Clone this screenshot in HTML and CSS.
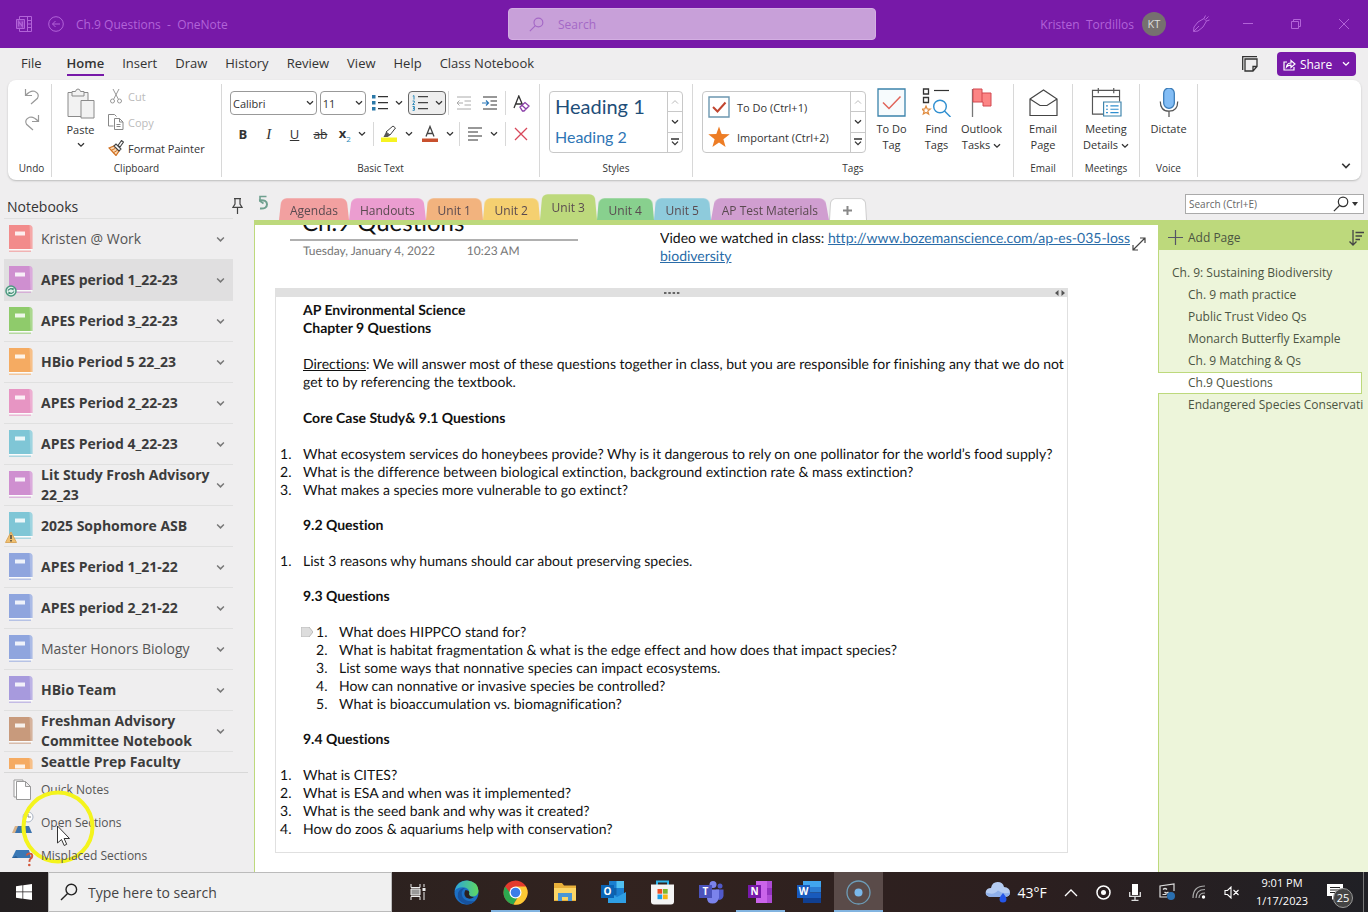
FILE: index.html
```
<!DOCTYPE html>
<html lang="en">
<head>
    <meta charset="UTF-8">
    <meta name="viewport" content="width=device-width, initial-scale=1.0">
    <title>Ch.9 Questions - OneNote</title>
    <link rel="stylesheet" href="styles.css">
</head>
<body>

    <!-- shared icons -->
    <svg class="defs" width="0" height="0">
        <symbol id="chev" viewBox="0 0 8 6"><path d="M1 1.2l3 3 3-3" fill="none" stroke="currentColor" stroke-width="1.3"/></symbol>
        <symbol id="chev-up" viewBox="0 0 8 6"><path d="M1 4.6l3-3 3 3" fill="none" stroke="currentColor" stroke-width="1"/></symbol>
        <symbol id="chev-more" viewBox="0 0 8 8"><path d="M0 1h8M1 3.6l3 3 3-3" fill="none" stroke="currentColor" stroke-width="1.3"/></symbol>
        <symbol id="lens" viewBox="0 0 18 18"><path d="M7.6 10.4L1 17" fill="none" stroke="currentColor" stroke-width="1.4"/><circle cx="11.3" cy="6.6" r="5.3" fill="none" stroke="currentColor" stroke-width="1.4"/></symbol>
        <symbol id="book" viewBox="0 0 24 28">
            <path d="M0 0h20q3.500 0 3.500 3.500v20.500h-23.500z" fill="currentColor"/>
            <path d="M20.500 0q3 .5 3 3.500v20.500h-2z" fill="#fff" opacity=".25"/>
            <path d="M0 24h23.500v1.500h-23.500z" fill="#fff" opacity=".8"/>
            <path d="M0 25.500h22v1.500h-22z" fill="currentColor" opacity=".6"/>
            <path d="M6 6.500h10v4h-10z" fill="#fff" opacity=".85"/>
        </symbol>
    </svg>

    <header class="titlebar">
        <div class="title-left">
            <svg width="16" height="16" viewBox="0 0 16 16" fill="none" stroke="currentColor"><path d="M3.500 3.500v-3h12v15h-12v-3M11.500.5v15M11.500 4.500h4M11.500 8h4M11.500 11.500h4"/><path d="M.5 3.500h8v9h-8z" fill="currentColor" fill-opacity=".35"/><path d="M2.700 10.500v-5l3.600 5v-5" stroke-width="1.200"/></svg>
            <button class="back" aria-label="Back"><svg width="16" height="16" viewBox="0 0 16 16" fill="none" stroke="currentColor"><circle cx="8" cy="8" r="7.300"/><path d="M12 8H4.500M7.500 5l-3 3 3 3"/></svg></button>
            <span>Ch.9 Questions&nbsp; -&nbsp; OneNote</span>
        </div>
        <label class="title-search">
            <svg width="15" height="15"><use href="#lens"/></svg>
            <input type="text" placeholder="Search" aria-label="Search">
        </label>
        <div class="title-right">
            <span>Kristen&nbsp; Tordillos</span>
            <span class="avatar">KT</span>
            <div class="window-buttons">
                <button aria-label="Draw"><svg width="18" height="18" viewBox="0 0 18 18" fill="none" stroke="currentColor"><path d="M6 7l6-3.500 2.500 2.500L11 12l-5 4-4.500.5L2 12zM2 16l5-5M12 3.500l1.500-3M14 4l2.500-2.500M14.500 6l3-1"/></svg></button>
                <button aria-label="Minimize"><svg width="12" height="12" viewBox="0 0 12 12" fill="none" stroke="currentColor"><path d="M1 5.500h10"/></svg></button>
                <button aria-label="Restore"><svg width="12" height="12" viewBox="0 0 12 12" fill="none" stroke="currentColor"><path d="M1.500 3.500h7v7h-7zM3.500 3.500v-2h7v7h-2"/></svg></button>
                <button aria-label="Close"><svg width="12" height="12" viewBox="0 0 12 12" fill="none" stroke="currentColor"><path d="M1 1l10 10M11 1L1 11"/></svg></button>
            </div>
        </div>
    </header>

    <nav class="menu">
        <button>File</button>
        <button class="active">Home</button>
        <button>Insert</button>
        <button>Draw</button>
        <button>History</button>
        <button>Review</button>
        <button>View</button>
        <button>Help</button>
        <button>Class Notebook</button>
        <div class="menu-right">
            <button aria-label="Sticky notes"><svg width="16" height="16" viewBox="0 0 16 16" fill="none" stroke="#333" stroke-width="1.300"><path d="M.7 14V.7H15M3 3h12v7.500L11 15H3zM15 10.500h-4V15"/></svg></button>
            <button class="share">
                <svg width="13" height="13" viewBox="0 0 13 13" fill="none" stroke="currentColor" stroke-width="1.200"><path d="M4 4H1v8h10V9"/><path d="M3.500 9q.5-4 4.500-4V2.500L12 6 8 9.500V7.200Q5 7 3.500 9z"/></svg>
                Share
                <svg class="chev" width="8" height="6"><use href="#chev"/></svg>
            </button>
        </div>
    </nav>

    <section class="ribbon">
        <div class="group undo">
            <div class="tools">
                <button aria-label="Undo"><svg width="16" height="18" viewBox="0 0 16 18" fill="none" stroke="#999" stroke-width="1.200"><path d="M1.500 1v6.500H8M1.500 7.500q5-5.500 9-4.200 5.500 2.200 3 7L7 16"/></svg></button>
                <button aria-label="Redo"><svg width="16" height="18" viewBox="0 0 16 18" fill="none" stroke="#999" stroke-width="1.200"><path d="M14.500 1v6.500H8M14.500 7.500q-5-5.500-9-4.200-5.500 2.200-3 7L9 16"/></svg></button>
            </div>
            <div class="group-label">Undo</div>
        </div>

        <div class="group clipboard">
            <div class="tools">
                <button class="big">
                    <svg width="28" height="31" viewBox="0 0 28 31" stroke="#8a8a8a" fill="#f2f2f2"><path d="M1 4.500h20v24H1z"/><path d="M5 8V3.500h3.500Q9 1 11 1t2.500 2.500H17V8z"/><path d="M14 12.500h13V30H14z"/></svg>
                    <span>Paste</span>
                    <svg class="chev" width="8" height="6"><use href="#chev"/></svg>
                </button>
                <div class="stack">
                    <button class="off"><svg width="16" height="16" viewBox="0 0 16 16" fill="none" stroke="#999"><path d="M5 1l5.500 10.500M11 1L5.500 11.500"/><circle cx="4.500" cy="13" r="2"/><circle cx="11.500" cy="13" r="2"/></svg>Cut</button>
                    <button class="off"><svg width="16" height="16" viewBox="0 0 16 16" fill="#fff" stroke="#888"><path d="M5.500 12H.5V.5h6l2 2"/><path d="M6.500 4.500h5l3.500 3.500v7.500H6.500zM11.500 4.500V8H15M8.500 10.500h4M8.500 12.500h4"/></svg>Copy</button>
                    <button><svg width="16" height="16" viewBox="0 0 16 16" fill="none"><path d="M1 8l5-2 5 5-3 4.500z" fill="#fbd9b5" stroke="#d07020" stroke-width="1.200"/><path d="M3 10.500l4-2M5 13l4-2.500" stroke="#d07020"/><path d="M6 6l2-2 5 5-2 2zM10 5.500l3.500-5L15.500 2 12 7z" fill="#fff" stroke="#444" stroke-width="1.100"/></svg>Format Painter</button>
                </div>
            </div>
            <div class="group-label">Clipboard</div>
        </div>

        <div class="group basic">
            <div class="tools">
                <div class="row">
                    <label class="combo font"><select aria-label="Font"><option>Calibri</option></select><svg width="8" height="6"><use href="#chev"/></svg></label>
                    <label class="combo size"><select aria-label="Font size"><option>11</option></select><svg width="8" height="6"><use href="#chev"/></svg></label>
                    <button class="tool split" aria-label="Bullets"><svg width="16" height="16" viewBox="0 0 16 16"><path d="M0 0h3.500v3.500H0zM0 6h3.500v3.500H0zM0 12h3.500v3.500H0z" fill="#2b78a8"/><path d="M6 1.700h10M6 7.700h10M6 13.700h10" stroke="#333" stroke-width="1.200"/></svg><svg class="chev" width="8" height="6"><use href="#chev"/></svg></button>
                    <button class="tool split pressed" aria-label="Numbering"><svg width="16" height="16" viewBox="0 0 16 16" fill="none"><path d="M.8 1.200L2 .6v4M.6 6h1.700v1.500L.7 9.500h2M.6 11.500h1.800v1.800H1h1.400v2H.6" stroke="#2b88b8"/><path d="M6 1.700h10M6 7.700h10M6 13.700h10" stroke="#444" stroke-width="1.200"/></svg><svg class="chev" width="8" height="6"><use href="#chev"/></svg></button>
                    <span class="sep"></span>
                    <button class="tool" aria-label="Decrease indent"><svg width="16" height="14" viewBox="0 0 16 14" fill="none" stroke="#aaa"><path d="M1 1h14M8.500 5H15M8.500 9H15M1 13h14M7 7H1M3.500 4.500L1 7l2.500 2.500"/></svg></button>
                    <button class="tool" aria-label="Increase indent"><svg width="16" height="14" viewBox="0 0 16 14" fill="none" stroke="#333" stroke-width="1.200"><path d="M1 1h14M8.500 5H15M8.500 9H15M1 13h14"/><path d="M0 7h6.500M4 4.500L6.500 7 4 9.500" stroke="#2b78b8"/></svg></button>
                    <span class="sep"></span>
                    <button class="tool" aria-label="Clear formatting"><svg width="17" height="17" viewBox="0 0 17 17" fill="none"><path d="M1 13L5.800 1 10 11M2.500 9h6" stroke="#333" stroke-width="1.300"/><path d="M7 12l5-4.500 4 3.500-5 5H9.500zM9 10.300l4 3.700" fill="#fff" stroke="#8a3fa8" stroke-width="1.300"/></svg></button>
                </div>
                <div class="row">
                    <button class="tool"><b>B</b></button>
                    <button class="tool italic"><i>I</i></button>
                    <button class="tool"><u>U</u></button>
                    <button class="tool"><s>ab</s></button>
                    <button class="tool split sub"><span><b>x</b><sub>2</sub></span><svg class="chev" width="8" height="6"><use href="#chev"/></svg></button>
                    <span class="sep"></span>
                    <button class="tool split wide" aria-label="Highlight"><svg width="18" height="18" viewBox="0 0 18 18"><path d="M1 12.500h16V17H1z" fill="#f6f321"/><path d="M6 7l7-6 2.500 2L10 10z" fill="#fff" stroke="#444"/><path d="M6 7l4 3.500-2.500 1.500H3.500z" fill="#555"/></svg><svg class="chev" width="8" height="6"><use href="#chev"/></svg></button>
                    <button class="tool split wide" aria-label="Font color"><svg width="18" height="18" viewBox="0 0 18 18"><path d="M1 13.500h16V17H1z" fill="#c8502e"/><path d="M5 11.500L9 1.500l4 10M6.300 8.500h5.400" fill="none" stroke="#444" stroke-width="1.300"/></svg><svg class="chev" width="8" height="6"><use href="#chev"/></svg></button>
                    <span class="sep"></span>
                    <button class="tool split wide" aria-label="Align"><svg width="16" height="14" viewBox="0 0 16 14" stroke="#333" stroke-width="1.200"><path d="M1 1h14M1 5h10M1 9h14M1 13h10"/></svg><svg class="chev" width="8" height="6"><use href="#chev"/></svg></button>
                    <span class="sep"></span>
                    <button class="tool" aria-label="Delete"><svg width="14" height="14" viewBox="0 0 14 14" stroke="#d8475a" stroke-width="1.300"><path d="M1 1l12 12M13 1L1 13"/></svg></button>
                </div>
            </div>
            <div class="group-label">Basic Text</div>
        </div>

        <div class="group styles">
            <div class="tools">
                <div class="gallery">
                    <div class="gallery-items">
                        <button class="h1-style">Heading 1</button>
                        <button class="h2-style">Heading 2</button>
                    </div>
                    <div class="gallery-scroll">
                        <button class="off" aria-label="Up"><svg width="8" height="6"><use href="#chev-up"/></svg></button>
                        <button aria-label="Down"><svg width="8" height="6"><use href="#chev"/></svg></button>
                        <button aria-label="More"><svg width="8" height="8"><use href="#chev-more"/></svg></button>
                    </div>
                </div>
            </div>
            <div class="group-label">Styles</div>
        </div>

        <div class="group tags">
            <div class="tools">
                <div class="gallery">
                    <div class="gallery-items">
                        <button><svg width="22" height="22" viewBox="0 0 22 22" fill="#fff"><path d="M1 1h20v20H1z" stroke="#6c97b0" stroke-width="1.400"/><path d="M5 11l4.500 4.500 8-9" fill="none" stroke="#c0452f" stroke-width="2"/></svg>To Do (Ctrl+1)</button>
                        <button><svg width="22" height="22" viewBox="0 0 22 22"><path d="M11 .5l2.700 7.500 8 .2-6.300 5 2.200 7.800L11 16.500 4.400 21l2.200-7.800-6.300-5 8-.2z" fill="#ed7d25"/></svg>Important (Ctrl+2)</button>
                    </div>
                    <div class="gallery-scroll">
                        <button class="off" aria-label="Up"><svg width="8" height="6"><use href="#chev-up"/></svg></button>
                        <button aria-label="Down"><svg width="8" height="6"><use href="#chev"/></svg></button>
                        <button aria-label="More"><svg width="8" height="8"><use href="#chev-more"/></svg></button>
                    </div>
                </div>
                <button class="big">
                    <svg width="29" height="29" viewBox="0 0 29 29" fill="none"><path d="M1 1h27v27H1z" fill="#f7fbfd" stroke="#3b83ab" stroke-width="1.300"/><path d="M6 14.500l6 6L23.500 8.500" stroke="#e0645a" stroke-width="1.500"/></svg>
                    <span>To Do<br>Tag</span>
                </button>
                <button class="big">
                    <svg width="29" height="29" viewBox="0 0 29 29" fill="none"><path d="M1.500 1h5v5h-5zM1.500 9.500h5v5h-5z" stroke="#333" stroke-width="1.300"/><path d="M12 2.500h15" stroke="#333" stroke-width="1.200"/><circle cx="18" cy="18.500" r="6.300" stroke="#2f8fd0" stroke-width="1.400"/><path d="M22.500 23l6 6" stroke="#2f8fd0" stroke-width="1.400"/><path d="M4 18l1.200 3 3 .1-2.400 2 .9 3L4 24.500 1.300 26l.9-3-2.400-1.900 3-.1z" stroke="#e08a3c" stroke-width="1.200"/></svg>
                    <span>Find<br>Tags</span>
                </button>
                <button class="big">
                    <svg width="22" height="29" viewBox="0 0 22 29"><path d="M1.500 29V1" stroke="#777" stroke-width="1.300"/><path d="M2 1h9v4h9v13h-8v-4H2z" fill="#fc8585" stroke="#d34850"/><path d="M11 5v9" stroke="#d34850"/></svg>
                    <span>Outlook<br>Tasks <svg class="chev" width="8" height="6"><use href="#chev"/></svg></span>
                </button>
            </div>
            <div class="group-label">Tags</div>
        </div>

        <div class="group email">
            <div class="tools">
                <button class="big">
                    <svg width="29" height="29" viewBox="0 0 29 29" fill="none" stroke="#444" stroke-width="1.200"><path d="M1 11L14.500 2 28 11v16.500H1zM1 11l10 6.500h7L28 11"/></svg>
                    <span>Email<br>Page</span>
                </button>
            </div>
            <div class="group-label">Email</div>
        </div>

        <div class="group meetings">
            <div class="tools">
                <button class="big">
                    <svg width="31" height="29" viewBox="0 0 31 30" fill="none" stroke="#555" stroke-width="1.200"><path d="M12 27H1V2.500h28V14M1 9h28M7 0v5.500M23 0v5.500"/><path d="M12.500 14.500h18V29h-18z" fill="#fff" stroke="#3b83ab"/><path d="M15 18.500h2M15 22h2M15 25.500h2M19.500 18.500H28M19.500 22H28M19.500 25.500H28" stroke="#2f8fd0"/></svg>
                    <span>Meeting<br>Details <svg class="chev" width="8" height="6"><use href="#chev"/></svg></span>
                </button>
            </div>
            <div class="group-label">Meetings</div>
        </div>

        <div class="group voice">
            <div class="tools">
                <button class="big">
                    <svg width="20" height="29" viewBox="0 0 20 30" fill="none" stroke="#555" stroke-width="1.300"><path d="M4.500 5.500a5.500 5.500 0 0 1 11 0v10a5.500 5.500 0 0 1-11 0z" fill="#83bdf5" stroke="#3b7cb8"/><path d="M1 14q0 10 9 10t9-10M10 24v6"/></svg>
                    <span>Dictate</span>
                </button>
            </div>
            <div class="group-label">Voice</div>
        </div>

        <button class="collapse" aria-label="Collapse ribbon"><svg width="10" height="8"><use href="#chev"/></svg></button>
    </section>

    <main class="workspace">
        <aside class="sidebar">
            <div class="sidebar-head">
                <h2>Notebooks</h2>
                <button aria-label="Pin"><svg width="11" height="16" viewBox="0 0 11 16" fill="none" stroke="#444" stroke-width="1.200"><path d="M2 .7h7M3 1v5L1 9.300h9L8 6V1M5.500 9.500V16"/></svg></button>
            </div>
            <ul class="notebooks">
                <li><svg class="book red"><use href="#book"/></svg><span>Kristen @ Work</span><svg class="chev"><use href="#chev"/></svg></li>
                <li class="selected unread"><svg class="book violet"><use href="#book"/></svg><span>APES period 1_22-23</span><svg class="chev"><use href="#chev"/></svg>
                    <svg class="status" width="12" height="12" viewBox="0 0 12 12"><circle cx="6" cy="6" r="5" fill="#dff0ea" stroke="#4c9a80" stroke-width="1.500"/><path d="M3 5.500q2-3 5-1V3M9 6.500q-2 3-5 1V9" fill="none" stroke="#3c8a70" stroke-width="1.200"/></svg></li>
                <li class="unread"><svg class="book green"><use href="#book"/></svg><span>APES Period 3_22-23</span><svg class="chev"><use href="#chev"/></svg></li>
                <li class="unread"><svg class="book orange"><use href="#book"/></svg><span>HBio Period 5 22_23</span><svg class="chev"><use href="#chev"/></svg></li>
                <li class="unread"><svg class="book pink"><use href="#book"/></svg><span>APES Period 2_22-23</span><svg class="chev"><use href="#chev"/></svg></li>
                <li class="unread"><svg class="book teal"><use href="#book"/></svg><span>APES Period 4_22-23</span><svg class="chev"><use href="#chev"/></svg></li>
                <li class="unread"><svg class="book violet"><use href="#book"/></svg><span>Lit Study Frosh Advisory 22_23</span><svg class="chev"><use href="#chev"/></svg></li>
                <li class="unread"><svg class="book teal"><use href="#book"/></svg><span>2025 Sophomore ASB</span><svg class="chev"><use href="#chev"/></svg>
                    <svg class="status" width="12" height="12" viewBox="0 0 12 12"><path d="M6 1l5.500 10.500H.5z" fill="#f0c070" stroke="#d9a860"/><path d="M6 4v4M6 9v1.500" stroke="#333" stroke-width="1.300"/></svg></li>
                <li class="unread"><svg class="book blue"><use href="#book"/></svg><span>APES Period 1_21-22</span><svg class="chev"><use href="#chev"/></svg></li>
                <li class="unread"><svg class="book blue"><use href="#book"/></svg><span>APES period 2_21-22</span><svg class="chev"><use href="#chev"/></svg></li>
                <li><svg class="book blue"><use href="#book"/></svg><span>Master Honors Biology</span><svg class="chev"><use href="#chev"/></svg></li>
                <li class="unread"><svg class="book purple"><use href="#book"/></svg><span>HBio Team</span><svg class="chev"><use href="#chev"/></svg></li>
                <li class="unread"><svg class="book brown"><use href="#book"/></svg><span>Freshman Advisory Committee Notebook</span><svg class="chev"><use href="#chev"/></svg></li>
                <li class="unread cut"><svg class="book orange"><use href="#book"/></svg><span>Seattle Prep Faculty</span></li>
            </ul>
            <ul class="quick">
                <li><svg width="20" height="22" viewBox="0 0 20 22" fill="#fff" stroke="#999"><path d="M1 1h9v17H1z"/><path d="M3.500 2.500h9l5 5v13h-14zM12.500 2.500v5h5"/></svg><a href="#">Quick Notes</a></li>
                <li><svg width="22" height="24" viewBox="0 0 22 24"><path d="M3 15h7l-2 7H0z" fill="#d9b287"/><path d="M6 15h11l3 7H3z" fill="#3a72ad"/><path d="M10 15h3l-2 7H8z" fill="#4f9a80"/><circle cx="16" cy="6" r="5" fill="#fff" stroke="#aab4c4"/><path d="M16 3v3h3" fill="none" stroke="#888"/></svg><a href="#">Open Sections</a>
                    <svg class="pointer" width="74" height="74" viewBox="0 0 74 74"><circle cx="37" cy="37" r="34.500" fill="none" stroke="#f4f41c" stroke-width="4"/><path d="M36.500 36v17l4-3.500 2.700 6 2.500-1.200-2.600-5.800h5.400z" fill="#fff" stroke="#333"/></svg></li>
                <li><svg width="22" height="22" viewBox="0 0 22 22"><path d="M4 5h13l2 8H0z" fill="#3a78b5"/><path d="M0 13h6l-2-2" fill="#2a5d94"/><path d="M14.500 10.500q1-2.500 3.500-2 3 .5 2 3.500-.5 1-1.500 1.800-1.200 1-1 3" fill="none" stroke="#d2583c" stroke-width="2"/><circle cx="17.300" cy="20" r="1.300" fill="#d2583c"/></svg><a href="#">Misplaced Sections</a></li>
            </ul>
        </aside>

        <div class="notebook">
            <div class="sections">
                <button class="up" aria-label="Navigate up"><svg width="12" height="16" viewBox="0 0 12 16" fill="none" stroke="#6fa08f" stroke-width="2"><path d="M2 5.500q8-1 8 3.800T3 13.500"/><path d="M9.500 1.500H3v4.500l3.500 2.500" stroke-width="1.600"/></svg></button>
                <button class="tab c-red">Agendas</button>
                <button class="tab c-pink">Handouts</button>
                <button class="tab c-orange">Unit 1</button>
                <button class="tab c-yellow">Unit 2</button>
                <button class="tab c-lime current">Unit 3</button>
                <button class="tab c-green">Unit 4</button>
                <button class="tab c-blue">Unit 5</button>
                <button class="tab c-purple">AP Test Materials</button>
                <button class="tab c-new" aria-label="New section"><svg width="9" height="9" viewBox="0 0 9 9" stroke="#888" stroke-width="2"><path d="M4.500 0v9M0 4.500h9"/></svg></button>
                <label class="page-search">
                    <input type="text" placeholder="Search (Ctrl+E)" aria-label="Search pages">
                    <svg width="16" height="16"><use href="#lens"/></svg>
                    <svg width="6" height="4" viewBox="0 0 6 4"><path d="M0 0h6L3 4z" fill="#333"/></svg>
                </label>
            </div>

            <div class="panes">
                <article class="canvas">
                    <div class="page-head">
                        <div class="page-title">
                            <h1>Ch.9 Questions</h1>
                            <p class="stamp"><span>Tuesday, January 4, 2022</span><span>10:23 AM</span></p>
                        </div>
                        <p class="video">Video we watched in class: <a href="#">http://www.bozemanscience.com/ap-es-035-loss<br>biodiversity</a></p>
                        <button class="expand" aria-label="Full page view"><svg width="14" height="14" viewBox="0 0 14 14" fill="none" stroke="#444" stroke-width="1.200"><path d="M1 13L13 1M8 1h5v5M1 8v5h5"/></svg></button>
                    </div>

                    <div class="note">
                        <div class="note-bar">
                            <svg width="16" height="4" viewBox="0 0 16 4" fill="#666"><path d="M0 1h2.500v2H0zM4.300 1h2.500v2H4.300zM8.600 1h2.500v2H8.600zM12.900 1h2.500v2h-2.500z"/></svg>
                            <svg class="grip" width="12" height="6" viewBox="0 0 12 6" fill="#555"><path d="M4.500 0v6L1 3zM7.500 0v6L11 3z"/></svg>
                        </div>
                        <div class="note-body">
                            <h3>AP Environmental Science<br>Chapter 9 Questions</h3>
                            <p><u>Directions</u>: We will answer most of these questions together in class, but you are responsible for finishing any that we do not get to by referencing the textbook.</p>
                            <h3>Core Case Study&amp; 9.1 Questions</h3>
                            <ol>
                                <li>What ecosystem services do honeybees provide? Why is it dangerous to rely on one pollinator for the world’s food supply?</li>
                                <li>What is the difference between biological extinction, background extinction rate &amp; mass extinction?</li>
                                <li>What makes a species more vulnerable to go extinct?</li>
                            </ol>
                            <h3>9.2 Question</h3>
                            <ol>
                                <li>List 3 reasons why humans should car about preserving species.</li>
                            </ol>
                            <h3>9.3 Questions</h3>
                            <ol class="nested">
                                <li><svg class="handle" width="12" height="10" viewBox="0 0 12 10"><path d="M0 0h8l4 5-4 5H0z" fill="#ddd" stroke="#bbb"/></svg>What does HIPPCO stand for?</li>
                                <li>What is habitat fragmentation &amp; what is the edge effect and how does that impact species?</li>
                                <li>List some ways that nonnative species can impact ecosystems.</li>
                                <li>How can nonnative or invasive species be controlled?</li>
                                <li>What is bioaccumulation vs. biomagnification?</li>
                            </ol>
                            <h3>9.4 Questions</h3>
                            <ol>
                                <li>What is CITES?</li>
                                <li>What is ESA and when was it implemented?</li>
                                <li>What is the seed bank and why was it created?</li>
                                <li>How do zoos &amp; aquariums help with conservation?</li>
                            </ol>
                        </div>
                    </div>
                </article>

                <aside class="pages">
                    <div class="pages-head">
                        <button><svg width="15" height="15" viewBox="0 0 15 15" stroke="#556" stroke-width="1.200"><path d="M7.500 0v15M0 7.500h15"/></svg>Add Page</button>
                        <button aria-label="Sort pages"><svg width="15" height="16" viewBox="0 0 15 16" fill="none" stroke="#444" stroke-width="1.300"><path d="M4 0v15M.5 11.500L4 15l3.500-3.500M6.500 2.500H15M6.500 6H13M6.500 9.500H11"/></svg></button>
                    </div>
                    <ul>
                        <li><a href="#">Ch. 9: Sustaining Biodiversity</a></li>
                        <li class="child"><a href="#">Ch. 9 math practice</a></li>
                        <li class="child"><a href="#">Public Trust Video Qs</a></li>
                        <li class="child"><a href="#">Monarch Butterfly Example</a></li>
                        <li class="child"><a href="#">Ch. 9 Matching &amp; Qs</a></li>
                        <li class="child current"><a href="#">Ch.9 Questions</a></li>
                        <li class="child"><a href="#">Endangered Species Conservati</a></li>
                    </ul>
                </aside>
            </div>
        </div>
    </main>

    <footer class="taskbar">
        <button class="start" aria-label="Start"><svg width="16" height="16" viewBox="0 0 16 16" fill="#fff"><path d="M0 2.200l6.500-.9v6.300H0zM7.200 1.200L16 0v7.600H7.200zM0 8.300h6.500v6.400L0 13.800zM7.200 8.300H16V16l-8.800-1.200z"/></svg></button>
        <label class="task-search">
            <svg width="18" height="18"><use href="#lens"/></svg>
            <input type="text" placeholder="Type here to search" aria-label="Type here to search">
        </label>
        <div class="apps">
            <button aria-label="Task View"><svg width="16" height="16" viewBox="0 0 16 16" fill="none" stroke="#eee"><path d="M1 0v3.500h9V0M1 16v-3.500h9V16M14 0v3M14 8v8"/><path d="M1 5h9v6H1z" fill="#999"/><path d="M12.500 4h3v3h-3z" fill="#eee" stroke="none"/></svg></button>
            <button aria-label="Edge"><svg width="25" height="25" viewBox="0 0 25 25"><defs><linearGradient id="eg" x1="0" y1="0" x2="1" y2="0"><stop offset="0" stop-color="#2ba5dc"/><stop offset="1" stop-color="#5fd860"/></linearGradient></defs><circle cx="12.500" cy="12.500" r="12" fill="#1c6fc4"/><path d="M.6 11Q3 .5 13 .5q11 1 11.500 10.500-.5 5.500-6.500 5.500-4-.2-3-3Q16 9 11 7.500 4 6.500.6 11z" fill="url(#eg)"/><path d="M11 8q-5 3-2.500 9 3.500 5.500 12 4-3.500 4-8.500 3.500Q2 21 4 13q2-5 7-5z" fill="#17529e"/><path d="M11.500 10q5 .5 3.500 4 .5 3 5 3-4 3-8 .5-3-3.500-.5-7.500z" fill="#2b2122"/></svg></button>
            <button class="open" aria-label="Chrome"><svg width="25" height="25" viewBox="0 0 25 25"><circle cx="12.500" cy="12.500" r="12" fill="#e33b2e"/><path d="M2.100 6.500a12 12 0 0 0 8.400 17.900L15.500 16l-6-.5z" fill="#2da94f"/><path d="M10.500 24.400A12 12 0 0 0 22.900 6.500H13l3 9z" fill="#fcc934"/><circle cx="12.500" cy="12.500" r="6" fill="#fff"/><circle cx="12.500" cy="12.500" r="4.800" fill="#3b7de8"/></svg></button>
            <button aria-label="File Explorer"><svg width="24" height="20" viewBox="0 0 24 20"><path d="M1 1h8l2 2.500h12V19H1z" fill="#e8b03a"/><path d="M1 6h22v12H1z" fill="#fbd667"/><path d="M5 19v-8h14v8h-4v-4H9v4z" fill="#4a96d6"/></svg></button>
            <button aria-label="Outlook"><svg width="25" height="24" viewBox="0 0 25 24"><path d="M8 1h15v20H8z" fill="#1a7fd0"/><path d="M15.500 1H23v7h-7.500z" fill="#50c0f0"/><path d="M8 8h7.500v7H8z" fill="#1060a8"/><path d="M7 12l9 5 9-5v11H7z" fill="#2f9fe4"/><path d="M0 5h13v13H0z" fill="#0a64b5"/><text x="6.500" y="15" class="glyph">O</text></svg></button>
            <button aria-label="Store"><svg width="25" height="25" viewBox="0 0 25 25"><path d="M7 6V1.500h11V6" fill="none" stroke="#2fb4ea" stroke-width="2"/><path d="M1 4.500h23v17q0 3-3 3H4q-3 0-3-3z" fill="#f4f4f4"/><path d="M7.500 9h4.700v4.700H7.500z" fill="#f04e23"/><path d="M13 9h4.700v4.700H13z" fill="#7cb82f"/><path d="M7.500 14.500h4.700v4.700H7.500z" fill="#1ea0e8"/><path d="M13 14.500h4.700v4.700H13z" fill="#f8b714"/></svg></button>
            <button aria-label="Teams"><svg width="25" height="24" viewBox="0 0 25 24"><circle cx="14" cy="4.500" r="3.500" fill="#7b83eb"/><circle cx="21" cy="6" r="2.500" fill="#5059c9"/><path d="M17 9.500h7.500V16q-1 4-5 4z" fill="#5059c9"/><path d="M8 9.500h12v8q-1 6-6.500 6T8 18z" fill="#7b83eb"/><path d="M0 5h13v13H0z" fill="#4b53bc"/><text x="6.500" y="15" class="glyph">T</text></svg></button>
            <button class="open" aria-label="OneNote"><svg width="25" height="24" viewBox="0 0 25 24"><path d="M8 1h16v22H8z" fill="#ca64ea"/><path d="M19 1h5v22h-5z" fill="#ae4bd5"/><path d="M19 8h5v7h-5z" fill="#9332bf"/><path d="M0 5h13v13H0z" fill="#7719aa"/><text x="6.500" y="15" class="glyph">N</text></svg></button>
            <button aria-label="Word"><svg width="25" height="24" viewBox="0 0 25 24"><path d="M6 1h18v6H6z" fill="#41a5ee"/><path d="M6 7h18v5.500H6z" fill="#2b7cd3"/><path d="M6 12.500h18V18H6z" fill="#185abd"/><path d="M6 18h18v5H6z" fill="#103f91"/><path d="M0 5h13v13H0z" fill="#185abd"/><text x="6.500" y="15" class="glyph">W</text></svg></button>
            <button class="open focused" aria-label="Recorder"><svg width="25" height="25" viewBox="0 0 25 25"><circle cx="12.500" cy="12.500" r="11.500" fill="none" stroke="#6d9db8" stroke-width="1.300"/><circle cx="12.500" cy="12.500" r="4" fill="#7ab8ea"/></svg></button>
        </div>
        <div class="tray">
            <button class="weather"><svg width="26" height="22" viewBox="0 0 26 22"><path d="M6 16Q0 15.500.7 11 1.500 7 6 7q1-6 6.500-6Q18 1 19 6q6 .5 6 5.500 0 4-5 4.500z" fill="#b5ccf2"/><path d="M6 16q-5-.5-5-4.500 8 3 12-2 5 4 12 2 0 4-5 4.500z" fill="#8fb0ea"/><path d="M18 12q3.500 4 3.500 6a3.500 3.500 0 0 1-7 0q0-2 3.500-6z" fill="#2456e8"/></svg>43°F</button>
            <button aria-label="Show hidden icons"><svg width="14" height="9" viewBox="0 0 14 9" fill="none" stroke="#fff" stroke-width="1.300"><path d="M1 8l6-6 6 6"/></svg></button>
            <button aria-label="Record"><svg width="15" height="15" viewBox="0 0 15 15"><circle cx="7.500" cy="7.500" r="6.500" fill="none" stroke="#fff" stroke-width="1.500"/><circle cx="7.500" cy="7.500" r="2.500" fill="#fff"/></svg></button>
            <button aria-label="Microphone"><svg width="12" height="17" viewBox="0 0 12 17"><path d="M3 0h6v11H3z" fill="#fff"/><path d="M.7 8v4.300h10.600V8M6 12.500v4M2.500 16.300h7" fill="none" stroke="#ddd" stroke-width="1.300"/></svg></button>
            <button aria-label="Display"><svg width="18" height="18" viewBox="0 0 18 18" fill="none" stroke="#ddd" stroke-width="1.200"><path d="M16 8V1L2 3v11h7M4.500 11.500h4M5 6.500q2-2 4 0M10.500 9q-2 2-4 0"/><circle cx="13" cy="13" r="4" fill="#2a6fb0" stroke="none"/></svg></button>
            <button aria-label="Network"><svg width="14" height="14" viewBox="0 0 14 14" fill="none" stroke="#aaa" stroke-width="1.200"><path d="M1 13Q1 1 13 1M4 13q0-8.500 9-8.500M7 13q0-5 6-5"/><circle cx="11.500" cy="12" r="1.700" fill="#fff" stroke="none"/></svg></button>
            <button aria-label="Volume"><svg width="15" height="13" viewBox="0 0 15 13" fill="none" stroke="#fff" stroke-width="1.100"><path d="M1 4.500h2.500L7 1v11L3.500 8.500H1zM9.500 4l5 5M14.500 4l-5 5"/></svg></button>
            <button class="clock">9:01 PM<br>1/17/2023</button>
            <button class="notices" aria-label="Notifications"><svg width="16" height="16" viewBox="0 0 16 16"><path d="M0 0h16v12H9l-4 4v-4H0z" fill="#fff"/><path d="M3 3.500h10M3 6h10M3 8.500h6" stroke="#222"/></svg><span class="count">25</span></button>
        </div>
    </footer>

</body>
</html>
```
FILE: styles.css
```
* {
    box-sizing: border-box;
}
body {
    margin: 0;
    height: 100vh;
    display: flex;
    flex-direction: column;
    overflow: hidden;
    background: #efeeef;
    color: #333;
    font-family: "Open Sans", "Noto Sans", sans-serif;
    font-size: 12px;
}
button {
    display: flex;
    align-items: center;
    justify-content: center;
    padding: 0;
    border: 0;
    background: none;
    color: inherit;
    font: inherit;
}
input, select {
    min-width: 0;
    border: 0;
    outline: 0;
    background: none;
    color: inherit;
    font: inherit;
}
h1, h2, h3, p, ul, ol {
    margin: 0;
    padding: 0;
}
ul {
    list-style: none;
}
svg {
    flex: none;
}
.defs {
    position: absolute;
}

/* title bar */
.titlebar {
    display: grid;
    grid-template-columns: 1fr 368px 1fr;
    align-items: center;
    height: 48px;
    flex: none;
    padding-left: 16px;
    background: #7719a8;
    color: #b263d8;
}
.title-left, .title-right {
    display: flex;
    align-items: center;
}
.title-right {
    justify-content: flex-end;
}
.back {
    margin: 0 12px 0 16px;
}
.title-search {
    display: flex;
    align-items: center;
    gap: 12px;
    height: 32px;
    padding-left: 20px;
    border: 1px solid #d3aee2;
    border-radius: 4px;
    background: #c8a0d9;
    color: #a468c6;
}
.title-search input {
    flex: 1;
    font-size: 12px;
}
.title-search input::placeholder {
    color: #a468c6;
}
.avatar {
    width: 24px;
    height: 24px;
    margin: 0 12px 0 8px;
    border-radius: 50%;
    background: #76706f;
    color: #ddd;
    font-size: 11px;
    line-height: 24px;
    text-align: center;
}
.window-buttons {
    display: flex;
}
.window-buttons button {
    width: 48px;
    height: 48px;
}
.window-buttons button:first-child {
    width: 46px;
}

/* menu */
.menu {
    display: flex;
    align-items: center;
    height: 32px;
    flex: none;
    padding: 0 12px;
    font-size: 13px;
}
.menu > button {
    height: 24px;
    margin: 0 9px;
    border-bottom: 2px solid transparent;
}
.menu > .active {
    margin-left: 16px;
    border-color: #7719a8;
    font-weight: 600;
}
.menu-right {
    display: flex;
    align-items: center;
    gap: 19px;
    margin-left: auto;
}
.share {
    gap: 4px;
    width: 79px;
    height: 24px;
    border-radius: 4px;
    background: #7719a8;
    color: #fff;
    font-size: 12px;
}
.share .chev {
    margin-left: 6px;
}

/* ribbon */
.ribbon {
    display: flex;
    align-items: stretch;
    flex: none;
    height: 100px;
    margin: 0 7px 8px 8px;
    border-radius: 8px;
    background: #fff;
    box-shadow: 0 1px 2px #bbb;
    font-size: 11px;
}
.group {
    display: flex;
    flex-direction: column;
    margin: 4px 0 3px;
    border-right: 1px solid #d8d8d8;
}
.tools {
    display: flex;
    flex: 1;
    justify-content: center;
    padding-top: 4px;
}
.group-label {
    height: 18px;
    font-size: 10px;
    line-height: 18px;
    text-align: center;
}
.undo {
    width: 44px;
}
.undo .tools {
    flex-direction: column;
    justify-content: flex-start;
    align-items: center;
    gap: 8px;
    padding-left: 4px;
}
.undo .group-label {
    padding-left: 4px;
}
.clipboard {
    width: 170px;
}
.basic {
    width: 318px;
}
.styles {
    width: 153px;
}
.tags {
    width: 321px;
}
.email {
    width: 59px;
}
.meetings {
    width: 67px;
}
.voice {
    width: 58px;
}
.big {
    flex-direction: column;
    justify-content: flex-start;
    width: 45px;
    line-height: 16px;
}
.big > span {
    margin-top: 4px;
    white-space: nowrap;
}
.big > .chev {
    margin-top: 4px;
}
.clipboard .tools {
    justify-content: flex-start;
    gap: 5px;
    padding-left: 6px;
}
.clipboard .big > span {
    margin-top: 3px;
}
.stack {
    display: flex;
    flex-direction: column;
    gap: 10px;
}
.stack button {
    justify-content: flex-start;
    gap: 4px;
    height: 16px;
}
.off {
    color: #bbb;
}
.basic .tools {
    flex-direction: column;
    justify-content: flex-start;
    gap: 7px;
    padding: 7px 5px 0 8px;
}
.row {
    display: flex;
    align-items: center;
    height: 24px;
}
.combo {
    display: flex;
    align-items: center;
    height: 24px;
    margin-right: 3px;
    padding-right: 2px;
    border: 1px solid #999;
    border-radius: 4px;
}
.combo select {
    flex: 1;
    padding: 0 0 0 2px;
    appearance: none;
}
.font {
    width: 87px;
}
.size {
    width: 46px;
}
.tool {
    width: 26px;
    height: 24px;
    font-size: 13px;
}
.italic {
    font-family: "Liberation Serif", serif;
    font-size: 15px;
}
.tool s {
    font-size: 12px;
}
.split {
    gap: 7px;
    width: 38px;
}
.split.wide {
    width: 41px;
}
.pressed {
    margin-left: 2px;
    border: 1px solid #666;
    border-radius: 4px;
    background: #eee;
}
.sub sub {
    color: #2b88b8;
    font-size: 8px;
}
.sep {
    width: 1px;
    height: 24px;
    margin: 0 2px;
    background: #d8d8d8;
}
.gallery {
    display: flex;
    height: 62px;
    margin-top: 3px;
    border: 1px solid #c8c8c8;
    border-radius: 4px;
}
.gallery-items {
    display: flex;
    flex: 1;
    flex-direction: column;
}
.gallery-items button {
    flex: 1;
    justify-content: flex-start;
    gap: 7px;
    padding-left: 5px;
    white-space: nowrap;
}
.gallery-scroll {
    display: flex;
    flex-direction: column;
    width: 15px;
    border-left: 1px solid #c8c8c8;
}
.gallery-scroll button {
    flex: 1;
}
.gallery-scroll button + button {
    border-top: 1px solid #c8c8c8;
}
.styles .gallery {
    width: 134px;
}
.gallery .h1-style, .gallery .h2-style {
    padding-bottom: 2px;
    font-family: Lato, sans-serif;
}
.h1-style {
    color: #1e4e79;
    font-size: 20px;
}
.h2-style {
    color: #2e75b5;
    font-size: 16px;
}
.tags .gallery {
    width: 164px;
    margin-right: 3px;
}
.collapse {
    align-self: flex-end;
    margin: 0 10px 10px auto;
}

/* workspace */
.workspace {
    display: flex;
    flex: 1;
    min-height: 0;
}
.sidebar {
    display: flex;
    flex-direction: column;
    flex: none;
    width: 254px;
}
.sidebar-head {
    display: flex;
    align-items: center;
    justify-content: space-between;
    height: 30px;
    flex: none;
    padding: 6px 11px 0 7px;
}
.sidebar-head h2 {
    font-size: 14px;
    font-weight: 400;
}
.notebooks {
    flex: 1;
    min-height: 0;
    margin: 0 21px 0 4px;
    overflow: hidden;
    font-size: 14px;
    line-height: 20px;
}
.notebooks li {
    position: relative;
    display: flex;
    align-items: center;
    height: 41px;
    padding: 0 8px 0 5px;
    border-top: 1px solid #e0e0e0;
}
.notebooks span {
    flex: 1;
    color: #555;
}
.notebooks .unread span {
    color: #3c3c3c;
    font-weight: 700;
}
.notebooks .selected {
    background: #e0dfe0;
}
.notebooks .cut {
    align-items: flex-start;
}
.notebooks .cut .book {
    margin-top: 6px;
}
.book {
    width: 24px;
    height: 28px;
    margin-right: 8px;
}
.notebooks .chev {
    width: 9px;
    height: 7px;
    color: #777;
}
.status {
    position: absolute;
    left: 1px;
    bottom: 3px;
}
.red { color: #f28b8b; }
.violet { color: #cf8fd0; }
.green { color: #8fcb6b; }
.orange { color: #f5ab62; }
.pink { color: #e795c3; }
.teal { color: #7fc6d6; }
.blue { color: #8fa5de; }
.purple { color: #a79add; }
.brown { color: #c89a7c; }
.quick {
    flex: none;
    margin: 3px 6px 0 4px;
    border-top: 1px solid #d8d8d8;
}
.quick li {
    position: relative;
    display: flex;
    align-items: center;
    gap: 7px;
    height: 33px;
    padding-left: 8px;
}
.quick li > svg:first-child {
    width: 22px;
}
.quick a {
    color: #555;
    text-decoration: none;
}
.pointer {
    position: absolute;
    left: 17px;
    top: -16px;
}

/* section tabs */
.notebook {
    display: flex;
    flex: 1;
    flex-direction: column;
    min-width: 0;
}
.sections {
    display: flex;
    align-items: flex-end;
    height: 37px;
    flex: none;
    border-bottom: 5px solid #bdd97c;
}
.up {
    align-self: flex-start;
    margin: 7px 10px 0 3px;
}
.tab {
    position: relative;
    z-index: 0;
    min-width: 57px;
    height: 24px;
    padding: 4px 11px 0;
    color: #5a4a50;
}
.tab::before {
    content: "";
    position: absolute;
    z-index: -1;
    inset: 0;
    border-radius: 6px 6px 0 0;
    background: var(--tab);
    transform: perspective(80px) rotateX(14deg);
    transform-origin: bottom;
}
.tab.current {
    height: 29px;
}
.c-red { --tab: #f2a0a0; }
.c-pink { --tab: #eb9dd0; }
.c-orange { --tab: #f2b37e; }
.c-yellow { --tab: #f5d070; }
.c-lime { --tab: #bdd97c; }
.c-green { --tab: #88d08e; }
.c-blue { --tab: #8ecbdc; }
.c-purple { --tab: #d09ed0; }
.c-new {
    --tab: #fff;
    min-width: 38px;
}
.c-new::before {
    border: 1px solid #ccc;
    border-bottom: 0;
}
.page-search {
    display: flex;
    align-items: center;
    align-self: flex-start;
    gap: 3px;
    width: 179px;
    height: 20px;
    margin: 6px 4px 0 auto;
    padding: 0 5px 0 2px;
    border: 1px solid #aaa;
    background: #fff;
}
.page-search input {
    flex: 1;
    padding: 0 1px;
    font-size: 10px;
}
.page-search input::placeholder {
    color: #666;
}

/* page */
.panes {
    display: flex;
    flex: 1;
    min-height: 0;
}
.canvas {
    flex: 1;
    min-width: 0;
    overflow: hidden;
    border-left: 1px solid #bdd97c;
    background: #fff;
    color: #111;
    font-family: Lato, Carlito, sans-serif;
    font-size: 14px;
    font-variant-ligatures: none;
    line-height: 18px;
    text-rendering: geometricPrecision;
}
.page-head {
    display: flex;
    height: 63px;
    padding: 0 12px 0 35px;
}
.page-title {
    width: 288px;
    margin-top: -19px;
}
.page-title h1 {
    height: 35px;
    padding-left: 12px;
    border-bottom: 2px solid #b0b0b0;
    font-size: 24px;
    font-weight: 400;
    line-height: 33px;
}
.stamp {
    display: flex;
    gap: 32px;
    padding-left: 13px;
    color: #777;
    font-size: 12px;
    line-height: 20px;
}
.video {
    flex: 1;
    min-width: 0;
    margin: 4px 0 0 82px;
    overflow: hidden;
    white-space: nowrap;
}
.video a {
    color: #2a6ca8;
}
.expand {
    align-self: flex-start;
    margin-top: 12px;
}
.note {
    max-width: 793px;
    margin-left: 20px;
    border: 1px solid #e0e0e0;
}
.note-bar {
    display: flex;
    align-items: center;
    justify-content: center;
    height: 8px;
    background: #e0e0e0;
}
.note-bar .grip {
    margin: 0 1px 0 -13px;
}
.note-bar svg:first-child {
    margin: 0 auto;
}
.note-body {
    padding: 4px 0 14px 27px;
}
.note-body h3 {
    font-size: 14px;
}
.note-body h3, .note-body p {
    margin-bottom: 18px;
}
.note-body ol {
    margin-bottom: 17px;
    list-style: none;
    counter-reset: item;
}
.note-body ol:last-child {
    margin-bottom: 0;
}
.note-body li {
    position: relative;
    display: flex;
    margin-left: -23px;
    counter-increment: item;
}
.note-body li::before {
    content: counter(item) ".";
    width: 23px;
    flex: none;
}
.note-body .nested li {
    margin-left: 13px;
}
.handle {
    position: absolute;
    left: -15px;
    top: 4px;
}

/* page list */
.pages {
    width: 210px;
    flex: none;
    border-left: 1px solid #bdd97c;
    background: #edf5da;
    color: #4b5442;
}
.pages-head {
    display: flex;
    align-items: center;
    justify-content: space-between;
    height: 25px;
    padding: 0 4px 0 9px;
    background: #bdd97c;
}
.pages-head button {
    gap: 5px;
}
.pages ul {
    padding-top: 12px;
}
.pages li {
    height: 22px;
    padding-left: 13px;
    line-height: 22px;
    white-space: nowrap;
    overflow: hidden;
}
.pages .child {
    padding-left: 29px;
}
.pages .current {
    margin: 0 6px 0 -1px;
    padding-left: 30px;
    border: 1px solid #bdd97c;
    border-left: 0;
    background: #fff;
    line-height: 20px;
}
.pages a {
    color: inherit;
    text-decoration: none;
}

/* taskbar */
.taskbar {
    display: flex;
    height: 40px;
    flex: none;
    background: linear-gradient(to right, #231f20, #32231f 45%, #2c1f1f 75%, #202025);
    color: #fff;
}
.start {
    width: 48px;
}
.task-search {
    display: flex;
    align-items: center;
    gap: 8px;
    width: 344px;
    padding-left: 11px;
    border: 1px solid #bbb;
    background: #f0f0f0;
    color: #222;
}
.task-search input {
    flex: 1;
    font-size: 14px;
}
.task-search input::placeholder {
    color: #444;
}
.apps {
    display: flex;
    margin-left: 1px;
}
.apps button {
    width: 49px;
    border-bottom: 2px solid transparent;
    border-top: 2px solid transparent;
}
.apps .open {
    border-bottom-color: #82b4e0;
}
.apps .focused {
    border-top-color: #5a4b49;
    background: #5a4b49;
}
.glyph {
    fill: #fff;
    font-size: 10px;
    font-weight: 700;
    text-anchor: middle;
}
.tray {
    display: flex;
    margin-left: auto;
    margin-right: 4px;
    border-right: 1px solid #777;
}
.tray button {
    width: 32px;
}
.tray .weather {
    gap: 6px;
    width: 78px;
    font-size: 14px;
}
.tray .clock {
    width: 70px;
    font-size: 11px;
    line-height: 18px;
}
.tray .notices {
    position: relative;
    width: 46px;
    padding-right: 10px;
}
.count {
    position: absolute;
    right: 10px;
    bottom: 4px;
    width: 20px;
    height: 20px;
    border: 1px solid #999;
    border-radius: 50%;
    background: #444;
    font-size: 11px;
    line-height: 18px;
    text-align: center;
}
```
